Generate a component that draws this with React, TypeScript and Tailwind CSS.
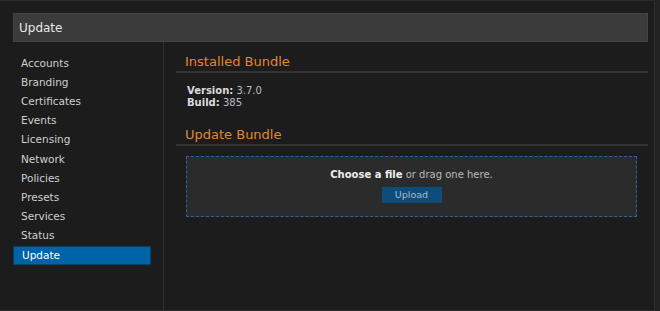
import React from 'react';

const navItems = [
  'Accounts',
  'Branding',
  'Certificates',
  'Events',
  'Licensing',
  'Network',
  'Policies',
  'Presets',
  'Services',
  'Status',
  'Update',
];

const SectionTitle = ({ children }: { children: React.ReactNode }) => (
  <div className="border-b-2 border-[#333333] pl-[9px] pb-[1px]">
    <h2 className="text-[13px] leading-[16px] text-[#e0882f]">{children}</h2>
  </div>
);

const App = () => {
  return (
    <div
      className="w-[660px] h-[311px] bg-[#222222] text-[#d0d0d0] overflow-hidden"
      style={{ fontFamily: 'Tahoma, "DejaVu Sans", "Noto Sans", sans-serif' }}
    >
      <div className="w-[655px] h-[311px] bg-[#1c1c1c] border-t border-r border-b border-[#2c2c2c] pt-[12px] pl-[13px] pr-[6px] flex flex-col">
        <div className="h-[29px] bg-[#3b3b3b] border border-[#444444] flex items-center pl-[5px]">
          <span className="text-[12px] text-[#e8e8e8]">Update</span>
        </div>

        <div className="flex flex-1">
          <aside className="w-[151px] border-r border-[#2e2e2e] pr-[12px] pt-[12px]">
            <ul>
              {navItems.map((item) => (
                <li
                  key={item}
                  className={
                    item === 'Update'
                      ? 'h-[19.2px] flex items-center pl-[8px] text-[10.5px] bg-[#0063a6] border border-[#04406a] text-white'
                      : 'h-[19.2px] flex items-center pl-[8px] text-[10.5px] text-[#cfcfcf]'
                  }
                >
                  {item}
                </li>
              ))}
            </ul>
          </aside>

          <main className="flex-1 pl-[12px] pt-[12px]">
            <SectionTitle>Installed Bundle</SectionTitle>
            <div className="pl-[11px] pt-[12px] text-[10px] leading-[12px]">
              <p>
                <span className="font-bold text-[#dcdcdc]">Version:</span>{' '}
                <span className="text-[#bdbdbd]">3.7.0</span>
              </p>
              <p>
                <span className="font-bold text-[#dcdcdc]">Build:</span>{' '}
                <span className="text-[#bdbdbd]">385</span>
              </p>
            </div>

            <div className="pt-[18px]">
              <SectionTitle>Update Bundle</SectionTitle>
            </div>

            <div className="ml-[10px] mr-[11px] mt-[10px] h-[61px] bg-[#2b2b2b] border border-dashed border-[#2d639e] flex flex-col items-center pt-[12px]">
              <p className="text-[10px] leading-[12px]">
                <span className="font-bold text-[#eeeeee]">Choose a file</span>{' '}
                <span className="text-[#bbbbbb]">or drag one here.</span>
              </p>
              <button className="mt-[6px] w-[60px] h-[16px] bg-[#0c4d7c] text-[9.5px] text-[#a9bccb] flex items-center justify-center">
                Upload
              </button>
            </div>
          </main>
        </div>
      </div>
    </div>
  );
};

export default App;
